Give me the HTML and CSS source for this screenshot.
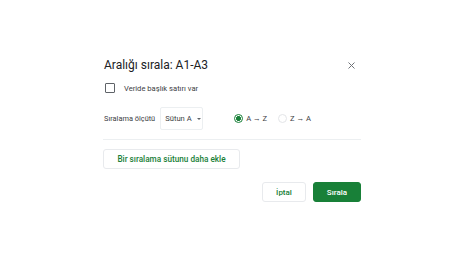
FILE: index.html
```html
<!DOCTYPE html>
<html lang="tr">
<head>
<meta charset="utf-8">
<link rel="stylesheet" href="styles.css">
</head>
<body>
<div class="dialog">
  <div class="header">
    <h1 class="title">Aralığı sırala: A1-A3</h1>
    <svg class="close" width="7" height="7" viewBox="0 0 7 7"><path d="M0.5 0.5L6.5 6.5M6.5 0.5L0.5 6.5" stroke="#6f7378" stroke-width="1"/></svg>
  </div>
  <label class="check-row"><span class="checkbox"></span><span class="check-label">Veride başlık satırı var</span></label>
  <div class="sort-row">
    <span class="sort-label">Sıralama ölçütü</span>
    <span class="select">Sütun A <span class="caret"></span></span>
    <span class="radio-group">
      <span class="radio checked"></span><span class="radio-label">A → Z</span>
      <span class="radio"></span><span class="radio-label">Z → A</span>
    </span>
  </div>
  <div class="divider"></div>
  <button class="add-btn">Bir sıralama sütunu daha ekle</button>
  <div class="actions">
    <button class="btn cancel">İptal</button>
    <button class="btn primary">Sırala</button>
  </div>
</div>
</body>
</html>
```
FILE: styles.css
```css
html, body { margin: 0; padding: 0; background: #fff; }
body { width: 474px; height: 266px; font-family: Roboto, "Noto Sans", sans-serif; color: #202124; }
.dialog { width: 258px; margin-left: 103px; padding-top: 56px; display: flex; flex-direction: column; }
.header { display: flex; justify-content: space-between; align-items: center; height: 18px; }
.title { margin: 0 0 0 1px; font-size: 12px; font-weight: 400; line-height: 18px; }
.close { margin-right: 6px; }
.check-row { display: flex; align-items: center; margin-top: 8px; height: 12px; }
.checkbox { width: 10px; height: 10px; box-sizing: border-box; border: 1.5px solid #5f6368; border-radius: 1px; margin-left: 2px; }
.check-label { font-size: 7.6px; color: #3c4043; margin-left: 9px; }
.sort-row { display: flex; align-items: center; margin-top: 13px; height: 23px; }
.sort-label { font-size: 7.4px; color: #3c4043; margin-left: 1px; }
.select { display: flex; align-items: center; height: 23px; width: 43px; box-sizing: border-box; border: 1px solid #eceff1; border-radius: 2px; padding: 0 0 0 4px; margin-left: 5px; font-size: 7.6px; color: #3c4043; }
.caret { width: 0; height: 0; border-left: 2.5px solid transparent; border-right: 2.5px solid transparent; border-top: 2.5px solid #5f6368; margin-left: 5px; }
.radio-group { display: flex; align-items: center; margin-left: 31px; font-size: 7.6px; color: #3c4043; }
.radio { width: 9px; height: 9px; box-sizing: border-box; border: 1px solid #e3e5e8; border-radius: 50%; }
.radio.checked { border: 1.5px solid #188038; background: radial-gradient(circle, #188038 0 2.2px, #fff 2.6px); }
.radio-label { margin-left: 3px; margin-right: 11px; }
.divider { height: 1px; background: #eceff1; margin-top: 9px; }
.add-btn { align-self: flex-start; margin-top: 9px; width: 137px; height: 20px; border: 1px solid #e8eaed; border-radius: 3px; background: #fff; font-family: inherit; font-size: 8.2px; color: #188038; font-weight: 500; padding: 0; }
.actions { display: flex; justify-content: flex-end; gap: 7px; margin-top: 13px; }
.btn { height: 20px; border-radius: 3px; font-family: inherit; font-size: 8px; font-weight: 500; padding: 0; }
.cancel { width: 44px; background: #fff; border: 1px solid #e8eaed; color: #188038; }
.primary { width: 48px; background: #188038; border: 1px solid #188038; color: #fff; }
```
